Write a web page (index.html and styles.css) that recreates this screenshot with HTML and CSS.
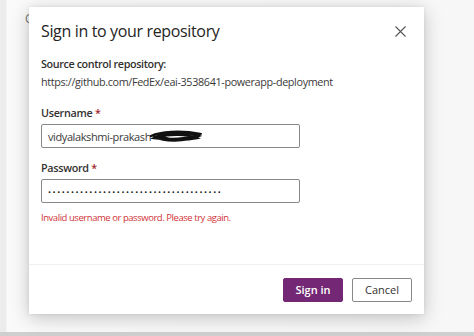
FILE: index.html
```html
<!DOCTYPE html>
<html>
<head>
    <meta charset="utf-8">
    <title>Sign in to your repository</title>
    <link rel="stylesheet" href="styles.css">
</head>
<body>
    <main class="pagina">
        <div class="pagina-conteudo">
            <p class="pagina-titulo">C</p>
        </div>
        <div class="pagina-rodape"></div>
    </main>

    <section class="dialogo">
        <header class="dialogo-topo">
            <h1>Sign in to your repository</h1>
            <button class="fechar" title="Close">
                <svg width="11" height="11" viewBox="0 0 11 11">
                    <path d="M0.5 0.5 L10.5 10.5 M10.5 0.5 L0.5 10.5" stroke="#555" stroke-width="1.1" fill="none"/>
                </svg>
            </button>
        </header>
        <div class="dialogo-corpo">
            <p class="rotulo-forte">Source control repository:</p>
            <p class="url">https://github.com/FedEx/eai-3538641-powerapp-deployment</p>

            <label class="rotulo">Username <span class="obrigatorio">*</span></label>
            <div class="campo">
                <span>vidyalakshmi-prakash</span>
                <svg class="rabisco" width="52" height="16" viewBox="0 0 52 16">
                    <path d="M1 8 C10 4, 30 2, 50 6 C40 11, 18 12, 4 10 C16 4, 36 3, 49 8 C34 14, 14 14, 6 9 C20 6, 38 6, 47 10 C32 13, 16 12, 8 7 C20 4, 36 4, 46 6" stroke="#111" stroke-width="2.4" fill="none" stroke-linecap="round"/>
                </svg>
            </div>

            <label class="rotulo rotulo-senha">Password <span class="obrigatorio">*</span></label>
            <div class="campo campo-senha">••••••••••••••••••••••••••••••••••••••</div>

            <p class="erro">Invalid username or password. Please try again.</p>
        </div>
        <footer class="dialogo-rodape">
            <button class="botao botao-primario">Sign in</button>
            <button class="botao">Cancel</button>
        </footer>
    </section>
</body>
</html>
```

FILE: styles.css
```css
body {
    margin: 0;
    font-family: "Open Sans", "Noto Sans", sans-serif;
    background-color: #f6f6f6;
    width: 474px;
    height: 336px;
    overflow: hidden;
    position: relative;
}

.pagina {
    height: 336px;
    display: flex;
    flex-direction: column;
    background: linear-gradient(to right, #ececec 0, #ececec 6px, #fafafa 7px, #f7f7f7 100%);
}

.pagina-conteudo {
    flex: 1;
    padding: 10px 0 0 25px;
}

.pagina-titulo {
    margin: 0;
    font-size: 12px;
    color: #777;
}

.pagina-rodape {
    height: 4px;
    background-color: #cfcfcf;
}

.dialogo {
    position: absolute;
    left: 29px;
    top: 7px;
    width: 395px;
    height: 307px;
    background-color: white;
    box-shadow: 0 4px 18px rgba(0, 0, 0, .22), 0 0 4px rgba(0, 0, 0, .08);
    display: flex;
    flex-direction: column;
}

.dialogo-topo {
    display: flex;
    justify-content: space-between;
    align-items: center;
    padding: 13px 18px 0 12px;
}

.dialogo-topo h1 {
    margin: 0;
    font-size: 16px;
    font-weight: 400;
    color: #252423;
    letter-spacing: -.35px;
}

.fechar {
    border: none;
    background: none;
    padding: 0;
    display: flex;
}

.dialogo-corpo {
    flex: 1;
    padding: 14px 12px 0 12px;
}

.rotulo-forte {
    margin: 0;
    font-size: 10.8px;
    font-weight: 600;
    color: #323130;
    letter-spacing: -.4px;
}

.url {
    margin: 3px 0 0 0;
    font-size: 10.8px;
    color: #3b3a39;
    letter-spacing: -.35px;
}

.rotulo {
    display: block;
    margin-top: 16px;
    font-size: 10.8px;
    font-weight: 600;
    color: #323130;
    letter-spacing: -.3px;
}

.rotulo-senha {
    margin-top: 12px;
}

.obrigatorio {
    color: #a4262c;
}

.campo {
    margin-top: 4px;
    width: 251px;
    height: 22px;
    border: 1px solid #8a8886;
    border-radius: 2px;
    display: flex;
    align-items: center;
    padding-left: 6px;
    font-size: 11px;
    color: #3b3a39;
    letter-spacing: -.4px;
}

.rabisco {
    margin-left: -1px;
}

.campo-senha {
    font-size: 8px;
    letter-spacing: 1.58px;
    color: #222;
}

.erro {
    margin: 8px 0 0 0;
    font-size: 9.5px;
    color: #d13438;
    letter-spacing: -.45px;
}

.dialogo-rodape {
    height: 49px;
    border-top: 1px solid #f1f1f1;
    display: flex;
    justify-content: flex-end;
    align-items: center;
    gap: 9px;
    padding: 0 12px 0 0;
}

.botao {
    width: 60px;
    height: 24px;
    border: 1px solid #8a8886;
    border-radius: 2px;
    background-color: white;
    font-family: "Open Sans", "Noto Sans", sans-serif;
    font-size: 11px;
    color: #323130;
    padding: 0;
}

.botao-primario {
    background-color: #742774;
    border-color: #742774;
    color: white;
    font-weight: 600;
}
```
